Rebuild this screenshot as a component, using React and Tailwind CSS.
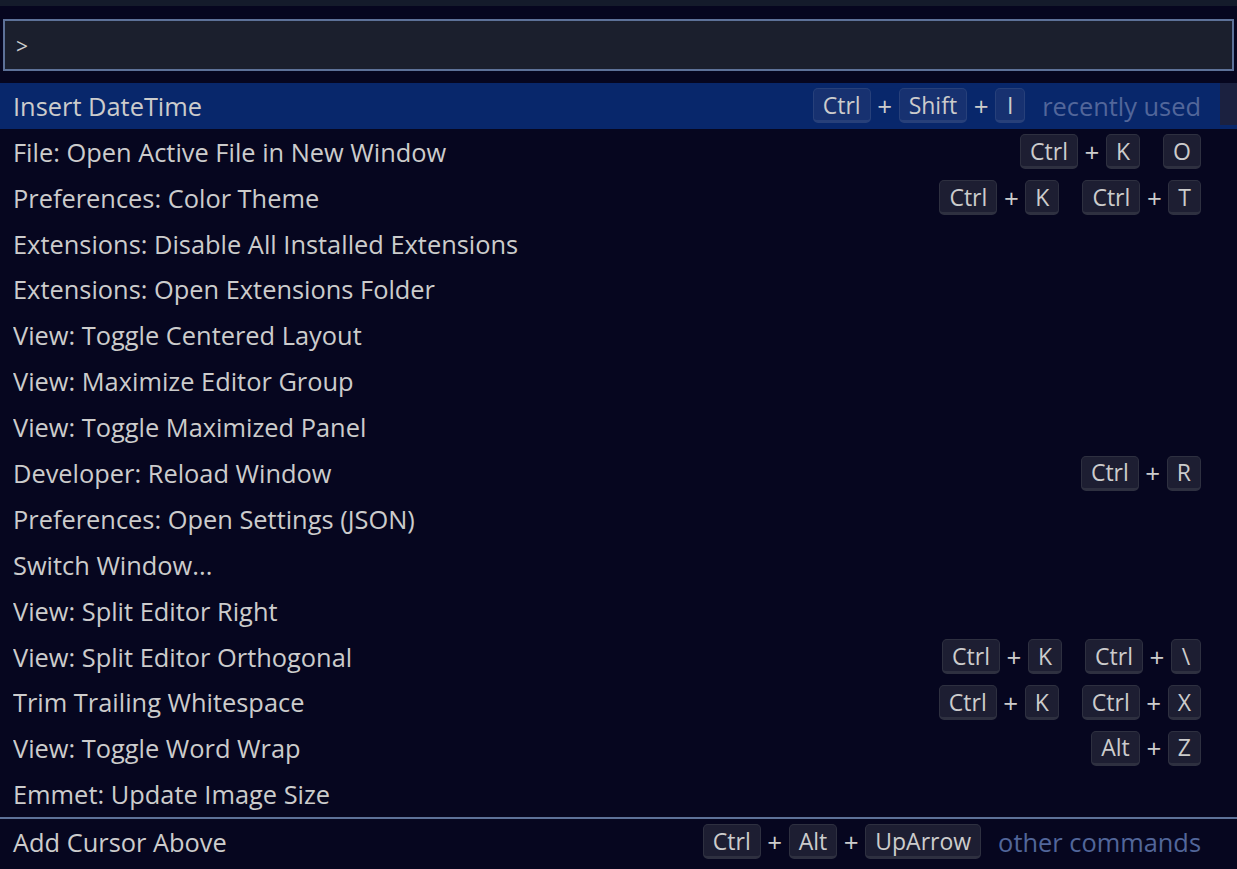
import React from "react";

const rows = [
  { label: "Insert DateTime", keys: [["Ctrl", "Shift", "I"]], note: "recently used", selected: true },
  { label: "File: Open Active File in New Window", keys: [["Ctrl", "K"], ["O"]] },
  { label: "Preferences: Color Theme", keys: [["Ctrl", "K"], ["Ctrl", "T"]] },
  { label: "Extensions: Disable All Installed Extensions" },
  { label: "Extensions: Open Extensions Folder" },
  { label: "View: Toggle Centered Layout" },
  { label: "View: Maximize Editor Group" },
  { label: "View: Toggle Maximized Panel" },
  { label: "Developer: Reload Window", keys: [["Ctrl", "R"]] },
  { label: "Preferences: Open Settings (JSON)" },
  { label: "Switch Window..." },
  { label: "View: Split Editor Right" },
  { label: "View: Split Editor Orthogonal", keys: [["Ctrl", "K"], ["Ctrl", "\\"]] },
  { label: "Trim Trailing Whitespace", keys: [["Ctrl", "K"], ["Ctrl", "X"]] },
  { label: "View: Toggle Word Wrap", keys: [["Alt", "Z"]] },
  { label: "Emmet: Update Image Size" },
];

function Key({ k, selected }) {
  return (
    <span
      className={
        "inline-flex h-[35px] min-w-[30px] items-center justify-center rounded-[5px] border border-b-[3px] px-[9px] pt-[1px] text-[23px] leading-none text-[#cccccc] " +
        (selected ? "border-[#27407a] bg-[#173170]" : "border-[#2e3040] bg-[#1d1e32]")
      }
    >
      {k}
    </span>
  );
}

function Chord({ keys, selected }) {
  return (
    <span className="flex items-center">
      {keys.map((k, i) => (
        <React.Fragment key={i}>
          {i > 0 && <span className="w-[28px] text-center text-[26px] leading-none text-[#cccccc]">+</span>}
          <Key k={k} selected={selected} />
        </React.Fragment>
      ))}
    </span>
  );
}

function Row({ row }) {
  return (
    <div
      className={
        "flex h-[45.9px] items-center pl-[13px] pr-[36px] " + (row.selected ? "bg-[#08276b]" : "")
      }
    >
      <span className="flex-1 truncate text-[25.4px] text-[#cccccc]">{row.label}</span>
      {row.keys && (
        <span className="flex items-center gap-[23px]">
          {row.keys.map((c, i) => (
            <Chord key={i} keys={c} selected={row.selected} />
          ))}
        </span>
      )}
      {row.note && <span className="ml-[17px] text-[25.4px] text-[#52669a]">{row.note}</span>}
    </div>
  );
}

export default function App() {
  return (
    <div
      className="relative h-[869px] w-[1237px] overflow-hidden bg-[#06061f]"
      style={{ fontFamily: '"Open Sans", "Noto Sans", sans-serif' }}
    >
      <div className="h-[6px] bg-[#141b2b]" />
      <div className="px-[3px] pt-[13px]">
        <div className="flex h-[52px] items-center border-2 border-[#5d7198] bg-[#1b1f2d] px-[11px] pt-[3px] text-[21px] text-[#cccccc]">
          &gt;
        </div>
      </div>
      <div className="relative mt-[12px]">
        {rows.map((r, i) => (
          <Row key={i} row={r} />
        ))}
        <div className="h-[2px] bg-[#5d7198]" />
        <div className="flex h-[45px] items-center pl-[13px] pr-[36px]">
          <span className="flex-1 text-[25.4px] text-[#cccccc]">Add Cursor Above</span>
          <Chord keys={["Ctrl", "Alt", "UpArrow"]} />
          <span className="ml-[17px] text-[25.4px] text-[#52669a]">other commands</span>
        </div>
        <div className="absolute right-0 top-0 h-[42px] w-[17px] bg-[#1b2140]" />
      </div>
    </div>
  );
}
